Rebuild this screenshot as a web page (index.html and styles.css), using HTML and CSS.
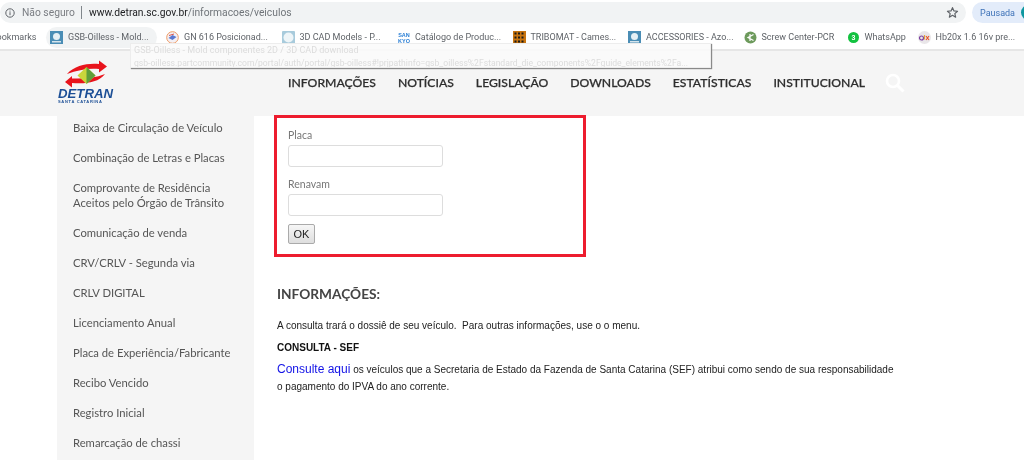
FILE: index.html
```html
<!DOCTYPE html>
<html lang="pt">
<head>
<meta charset="utf-8">
<title>Detran SC - Veículos</title>
<link rel="stylesheet" href="styles.css">
</head>
<body>
<div class="toolbar">
  <div class="omnibox">
    <svg class="info" width="10" height="10" viewBox="0 0 10 10"><circle cx="5" cy="5" r="4.2" fill="none" stroke="#5f6368" stroke-width="1"/><rect x="4.5" y="4.2" width="1" height="3" fill="#5f6368"/><rect x="4.5" y="2.6" width="1" height="1" fill="#5f6368"/></svg>
    <span class="insecure">Não seguro</span>
    <span class="sep"></span>
    <span class="url"><b>www.detran.sc.gov.br</b>/informacoes/veiculos</span>
    <svg class="star" width="13" height="13" viewBox="0 0 24 24"><path d="M12 3l2.7 6.1 6.6.6-5 4.4 1.5 6.5L12 17.2l-5.800 3.400 1.500-6.500-5-4.400 6.600-.6z" fill="none" stroke="#5f6368" stroke-width="2.200" stroke-linejoin="round"/></svg>
  </div>
  <div class="profile"><span>Pausada</span><i class="avatar"></i></div>
</div>
<div class="bookmarks">
  <span class="bm first">Bookmarks</span>
  <span class="bm hover"><svg width="13" height="13" viewBox="0 0 13 13"><rect width="13" height="13" fill="#4a8db5"/><circle cx="6.500" cy="5.500" r="3.500" fill="#e6f0f5"/><rect x="2" y="10" width="9" height="1.500" fill="#d5e4ec"/></svg>GSB-Oilless - Mold...</span>
  <span class="bm"><svg width="13" height="13" viewBox="0 0 13 13"><circle cx="6.500" cy="6.500" r="5.800" fill="#f3f0f5" stroke="#ef9a62" stroke-width="1"/><path d="M2.500 7l4-3 4 2-4 3z" fill="#5b78d0"/><path d="M3 4.500l5-1.500" stroke="#d9534f" stroke-width="1"/></svg>GN 616 Posicionad...</span>
  <span class="bm"><svg width="13" height="13" viewBox="0 0 13 13"><rect width="13" height="13" rx="1" fill="#a8cbdc"/><circle cx="6.500" cy="6.500" r="5" fill="#eef5f8"/></svg>3D CAD Models - P...</span>
  <span class="bm sankyo"><svg width="14" height="13" viewBox="0 0 14 13"><text x="7" y="5.500" class="kyo">SAN</text><text x="7" y="12" class="kyo">KYO</text></svg>Catálogo de Produc...</span>
  <span class="bm"><svg width="13" height="13" viewBox="0 0 13 13"><rect width="13" height="13" fill="#c8740f"/><path d="M1.500 2.500h10M1.500 6.500h10M1.500 10.500h10" stroke="#1a1a1a" stroke-width="2" stroke-dasharray="2 1.500"/></svg>TRIBOMAT - Cames...</span>
  <span class="bm"><svg width="13" height="13" viewBox="0 0 13 13"><rect width="13" height="13" fill="#4a8db5"/><circle cx="6.500" cy="5.500" r="3.500" fill="#e6f0f5"/><rect x="2" y="10" width="9" height="1.500" fill="#d5e4ec"/></svg>ACCESSORIES - Azo...</span>
  <span class="bm screw"><svg width="13" height="13" viewBox="0 0 13 13"><circle cx="6.500" cy="6.500" r="6" fill="#6d9a5c"/><path d="M9.500 3.500L4 6.500l5.500 3M6 3v7" stroke="#fff" stroke-width="1.200" fill="none"/></svg>Screw Center-PCR</span>
  <span class="bm whats"><svg width="13" height="13" viewBox="0 0 13 13"><circle cx="6.500" cy="6.500" r="5.500" fill="#12c23f"/><text x="6.500" y="9" class="wa">3</text></svg>WhatsApp</span>
  <span class="bm"><svg width="13" height="13" viewBox="0 0 13 13"><circle cx="6.500" cy="6.500" r="6.500" fill="#e9e6e9"/><circle cx="3.500" cy="7" r="2" fill="none" stroke="#7b3fa0" stroke-width="1.200"/><path d="M6.500 4v4.500" stroke="#e2a13a" stroke-width="1.200"/><path d="M8 5l3 4M11 5l-3 4" stroke="#e8562a" stroke-width="1.200"/></svg>Hb20x 1.6 16v pre...</span>
</div>
<div class="tooltip">
  <div>GSB-Oilless - Mold componentes 2D / 3D CAD download</div>
  <div>gsb-oilless.partcommunity.com/portal/auth/portal/gsb-oilless#!prjpathinfo=gsb_oilless%2Fstandard_die_components%2Fguide_elements%2Fa...</div>
</div>
<header class="site-header">
  <div class="logo">
    <svg width="58" height="28" viewBox="0 0 58 28">
      <path d="M9 14C17 5 30 3 41 4L41 .5 49 6.500 41 12.500 41 9C30 8 20 10 9 14z" fill="#e8141c"/>
      <path d="M47 14C40 23 27 24 14 23L14 27.500 7 22 14 16 14 18.500C26 19 37 18 47 14z" fill="#e8141c"/>
      <path d="M28.500 7l9 8.500-9 8.500-9-8.500z" fill="#c9d63c"/>
      <path d="M28.500 7l9 8.500-9 8.500z" fill="#5f9e3a"/>
    </svg>
    <span class="logo-name">DETRAN</span>
    <span class="logo-sub">SANTA CATARINA</span>
  </div>
  <nav class="nav">
    <a>INFORMAÇÕES</a>
    <a>NOTÍCIAS</a>
    <a>LEGISLAÇÃO</a>
    <a>DOWNLOADS</a>
    <a>ESTATÍSTICAS</a>
    <a>INSTITUCIONAL</a>
    <svg class="search" width="20" height="20" viewBox="0 0 20 20"><circle cx="8" cy="8" r="6" fill="none" stroke="#fff" stroke-width="2.600"/><path d="M12.500 12.500l6 6" stroke="#fff" stroke-width="3"/></svg>
  </nav>
</header>
<div class="content">
  <aside class="sidebar">
    <a>Baixa de Circulação de Veículo</a>
    <a>Combinação de Letras e Placas</a>
    <a>Comprovante de Residência<br>Aceitos pelo Órgão de Trânsito</a>
    <a>Comunicação de venda</a>
    <a>CRV/CRLV - Segunda via</a>
    <a>CRLV DIGITAL</a>
    <a>Licenciamento Anual</a>
    <a>Placa de Experiência/Fabricante</a>
    <a>Recibo Vencido</a>
    <a>Registro Inicial</a>
    <a>Remarcação de chassi</a>
  </aside>
  <main class="main">
    <form class="form-box">
      <label class="field-label">Placa</label>
      <input class="field" type="text">
      <label class="field-label">Renavam</label>
      <input class="field" type="text">
      <button class="ok" type="button">OK</button>
    </form>
    <h2 class="title">INFORMAÇÕES:</h2>
    <p class="para">A consulta trará o dossiê de seu veículo.&nbsp; Para outras informações, use o o menu.</p>
    <p class="para strong">CONSULTA - SEF</p>
    <p class="para last"><a class="link">Consulte aqui</a> os veículos que a Secretaria de Estado da Fazenda de Santa Catarina (SEF) atribui como sendo de sua responsabilidade<br>o pagamento do IPVA do ano corrente.</p>
  </main>
</div>
</body>
</html>
```
FILE: styles.css
```css
* { box-sizing: border-box; }
html, body { margin: 0; height: 460px; overflow: hidden; background: #fff; }
body { position: relative; font-family: "Lato", sans-serif; filter: blur(0.4px); }

.toolbar { height: 24px; padding: 2px 0 0; display: flex; gap: 6px; background: #fff; }
.omnibox { width: 966px; height: 21px; background: #f1f3f4; border-radius: 11px; display: flex; align-items: center; padding-left: 5px; font: 10.300px "Roboto", sans-serif; color: #5f6368; }
.info { margin-right: 7px; }
.insecure { width: 54px; white-space: nowrap; color: #7a7d82; }
.sep { width: 1px; height: 13px; background: #80868b; margin: 0 7px 0 5px; }
.url { white-space: nowrap; color: #70757a; }
.url b { font-weight: 400; color: #202124; }
.star { margin-left: auto; margin-right: 7px; }
.profile { flex: 1; height: 21px; background: #e3ecfa; border-radius: 11px 0 0 11px; display: flex; align-items: center; padding-left: 8px; gap: 6px; font: 9px "Roboto", sans-serif; color: #3f73b8; white-space: nowrap; overflow: hidden; }
.avatar { flex: none; width: 15px; height: 15px; border-radius: 50%; background: #0d97a0; }

.bookmarks { height: 27px; display: flex; align-items: center; padding-top: 1px; border-bottom: 2px solid #e6e6e6; background: #fff; overflow: hidden; font: 9px "Roboto", sans-serif; color: #5f6368; white-space: nowrap; }
.bm { flex: none; width: 115.500px; display: flex; align-items: center; gap: 5px; }
.bm svg { flex: none; }
.first { width: 55px; margin-left: -9px; }
.hover { width: 111px; height: 21px; margin-right: 9px; padding-left: 4px; background: #f1f3f4; border-radius: 11px; }
.sankyo { gap: 4px; }
.screw { width: 103px; }
.whats { width: 71px; }
.kyo { font: 700 5.500px "Liberation Sans", sans-serif; fill: #2a7fd5; text-anchor: middle; }
.wa { font: 700 7px "Liberation Sans", sans-serif; fill: #fff; text-anchor: middle; }

.tooltip { position: absolute; z-index: 5; left: 130px; top: 43px; width: 581px; height: 25px; padding: 0 3px; background: rgba(250,250,250,0.88); border: 1px solid #ededed; box-shadow: 1px 1px 1px #8a8a8a; font: 9px/12.500px "Roboto", sans-serif; color: #dcdcdc; white-space: nowrap; overflow: hidden; }
.tooltip div + div { font-size: 8.600px; }

.site-header { height: 65px; background: #f5f5f5; display: flex; }
.logo { width: 288px; padding: 9px 0 0 58px; line-height: 1; }
.logo svg { display: block; }
.logo-name { display: block; margin-top: 1px; font: italic 900 13.200px/10px "Liberation Sans", sans-serif; color: #1c4f96; }
.logo-sub { display: block; margin-top: 1px; font: 700 4px/4px "Liberation Sans", sans-serif; letter-spacing: .7px; color: #1c4f96; }
.nav { display: flex; align-items: center; gap: 22px; height: 62px; font: 500 12.200px "Lato", sans-serif; color: #2e2e2e; -webkit-text-stroke: .25px #2e2e2e; white-space: nowrap; }
.search { margin-left: -2px; margin-top: 2px; }

.content { display: flex; height: 344px; padding-left: 57px; }
.sidebar { width: 197px; background: #f5f5f5; padding: 4px 0 0 16px; font-size: 11.250px; line-height: 15px; color: #555; flex: none; }
.sidebar a { display: block; margin-bottom: 15px; white-space: nowrap; }
.main { flex: 1; padding-left: 20px; }

.form-box { position: relative; margin-top: -1px; width: 312px; height: 142px; border: 3px solid #ed1c2e; padding: 8px 0 0 11px; background: #fff; display: flex; flex-direction: column; align-items: flex-start; }
.field-label { font-size: 10.500px; line-height: 15px; color: #777; height: 19px; padding-top: 2px; }
.field { width: 155px; height: 22px; flex: none; border: 1px solid #ddd; border-radius: 3px; background: #fff; margin: 0 0 8px; padding: 0; }
.ok { width: 27px; height: 20px; flex: none; padding: 0; border: 1px solid #aaa; border-radius: 2px; background: linear-gradient(#f6f6f6, #dedede); font: 11px "Liberation Sans", sans-serif; color: #222; }

.title { margin: 28px 0 0 3px; font: 700 13.700px/18px "Lato", sans-serif; color: #444; }
.para { margin: 15px 0 0 3px; font: 10px/15px "Liberation Sans", sans-serif; color: #222; white-space: nowrap; }
.strong { margin-top: 7px; font-weight: 700; color: #111; }
.last { margin-top: 6px; line-height: 17px; }
.link { font-size: 12px; color: #1212e6; }
```
